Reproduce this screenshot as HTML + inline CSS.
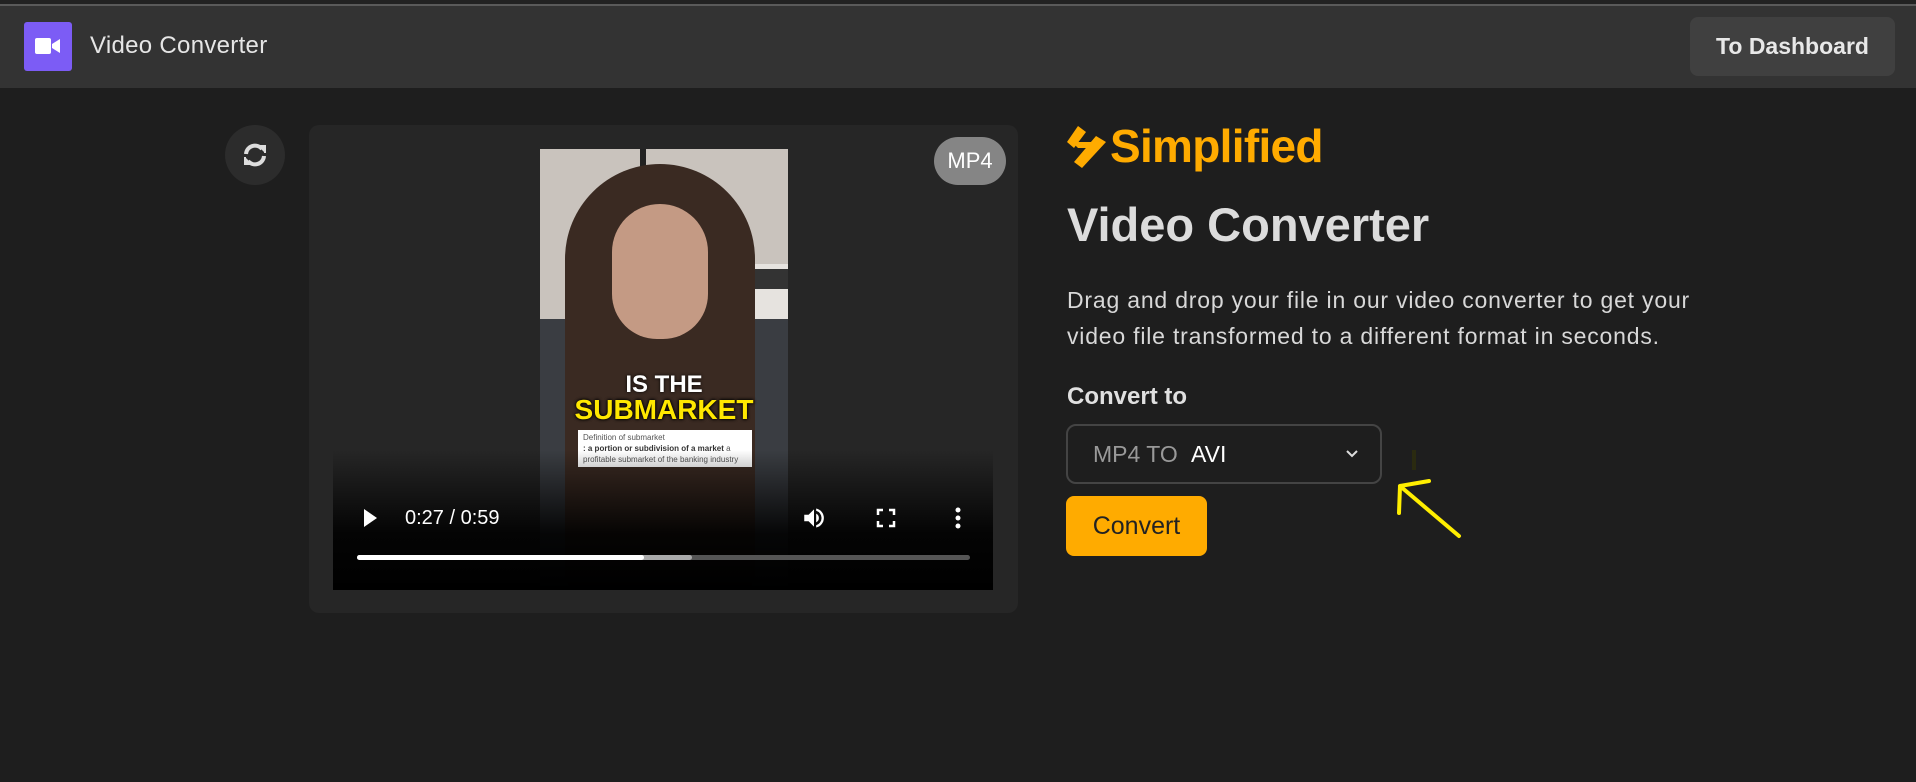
<!DOCTYPE html>
<html><head><meta charset="utf-8"><style>
*{margin:0;padding:0;box-sizing:border-box}
body{width:1916px;height:782px;background:#1e1e1e;font-family:"Liberation Sans",sans-serif;position:relative;overflow:hidden;color:#ddd}
.abs{position:absolute}
</style></head><body>
<div class="abs" style="left:0;top:0;width:1916px;height:4px;background:#222"></div>
<div class="abs" style="left:0;top:4px;width:1916px;height:2px;background:#5a5a5a"></div>
<div class="abs" style="left:0;top:6px;width:1916px;height:82px;background:#333"></div>
<div class="abs" style="left:24px;top:22px;width:48px;height:49px;background:#7c5cf5;border-radius:3px"></div>
<svg class="abs" style="left:34px;top:36px" width="28" height="20" viewBox="0 0 28 20"><rect x="1" y="2" width="16" height="16" rx="2" fill="#fff"/><path d="M18 8 L26 3 V17 L18 12Z" fill="#fff"/></svg>
<div class="abs" style="left:90px;top:32px;font-size:24px;letter-spacing:0.3px;color:#e6e6e6">Video Converter</div>
<div class="abs" style="left:1690px;top:17px;width:205px;height:59px;background:#404040;border-radius:8px;font-size:23px;font-weight:bold;color:#e8e8e8;text-align:center;line-height:59px">To Dashboard</div>

<div class="abs" style="left:225px;top:125px;width:60px;height:60px;border-radius:50%;background:#2c2c2c"></div>
<svg class="abs" style="left:241px;top:141px" width="28" height="28" viewBox="0 0 28 28" fill="none" stroke="#ddd" stroke-width="4"><path d="M5 13 A9 9 0 0 1 21 8"/><path d="M23 15 A9 9 0 0 1 7 20"/><path d="M17 5 L24 5 L24 12" fill="#ddd" stroke-width="2"/><path d="M11 23 L4 23 L4 16" fill="#ddd" stroke-width="2"/></svg>

<div class="abs" style="left:309px;top:125px;width:709px;height:488px;background:#262626;border-radius:10px"></div>
<div class="abs" style="left:333px;top:149px;width:660px;height:441px;background:#262626"></div>
<div class="abs" style="left:540px;top:149px;width:248px;height:441px;overflow:hidden;background:#c9c3bd">
 <div class="abs" style="left:100px;top:0;width:6px;height:60px;background:#222"></div>
 <div class="abs" style="left:190px;top:115px;width:60px;height:80px;background:#e6e3df"></div>
 <div class="abs" style="left:205px;top:120px;width:45px;height:20px;background:#333"></div>
 <div class="abs" style="left:0;top:170px;width:248px;height:271px;background:#3a3d42"></div>
 <div class="abs" style="left:25px;top:15px;width:190px;height:430px;border-radius:95px 95px 20px 20px;background:#3a2a22"></div>
 <div class="abs" style="left:72px;top:55px;width:96px;height:135px;border-radius:48px 48px 45px 45px;background:#c49a84"></div>
 <div class="abs" style="left:0;top:222px;width:248px;text-align:center;font-weight:900;font-size:24px;color:#fff;text-shadow:0 0 3px #000">IS THE</div>
 <div class="abs" style="left:0;top:245px;width:248px;text-align:center;font-weight:900;font-size:28px;color:#ffe800;text-shadow:0 0 3px #000,0 0 3px #000">SUBMARKET</div>
 <div class="abs" style="left:38px;top:281px;width:174px;height:37px;background:#fff;font-size:8px;color:#555;padding:2px 5px;line-height:11px">Definition of submarket<br><b style="color:#333">: a portion or subdivision of a market</b> a<br>profitable submarket of the banking industry</div>
</div>
<div class="abs" style="left:333px;top:450px;width:660px;height:140px;background:linear-gradient(rgba(0,0,0,0),rgba(0,0,0,.9) 60%,#000)"></div>
<svg class="abs" style="left:362px;top:508px" width="16" height="20"><path d="M2 1 L15 10 L2 19Z" fill="#fff"/></svg>
<div class="abs" style="left:405px;top:507px;font-size:20px;color:#fff">0:27 / 0:59</div>
<svg class="abs" style="left:801px;top:505px" width="26" height="26" viewBox="0 0 24 24" fill="#fff"><path d="M3 9v6h4l5 5V4L7 9H3zm13.5 3A4.5 4.5 0 0 0 14 8v8a4.5 4.5 0 0 0 2.5-4zM14 3.2v2.1a7 7 0 0 1 0 13.4v2.1a9 9 0 0 0 0-17.6z"/></svg>
<svg class="abs" style="left:876px;top:508px" width="20" height="20" fill="none" stroke="#fff" stroke-width="2.5"><path d="M2 7V2h5M13 2h5v5M18 13v5h-5M7 18H2v-5"/></svg>
<svg class="abs" style="left:954px;top:506px" width="8" height="24" fill="#fff"><circle cx="4" cy="4" r="2.5"/><circle cx="4" cy="12" r="2.5"/><circle cx="4" cy="20" r="2.5"/></svg>
<div class="abs" style="left:357px;top:555px;width:613px;height:5px;background:#555;border-radius:3px"></div>
<div class="abs" style="left:357px;top:555px;width:335px;height:5px;background:#aaa;border-radius:3px"></div>
<div class="abs" style="left:357px;top:555px;width:287px;height:5px;background:#fff;border-radius:3px"></div>
<div class="abs" style="left:934px;top:137px;width:72px;height:48px;border-radius:24px;background:#858585;color:#fff;font-size:22px;text-align:center;line-height:48px">MP4</div>

<svg class="abs" style="left:1066px;top:124px" width="42" height="46" viewBox="0 0 42 46"><path d="M12 2 L20 8 L8 24 L1 18Z" fill="#ffab00"/><path d="M30 12 L40 18 L16 44 L8 38Z" fill="#ffab00"/><path d="M6 18 L28 18 L34 24 L12 24Z" fill="#ffab00"/></svg>
<div class="abs" style="left:1110px;top:119px;font-size:46px;font-weight:bold;color:#ffab00;letter-spacing:-0.7px">Simplified</div>
<div class="abs" style="left:1067px;top:197px;font-size:47px;font-weight:bold;color:#dcdcdc">Video Converter</div>
<div class="abs" style="left:1067px;top:282px;font-size:23px;letter-spacing:0.8px;line-height:36px;color:#d8d8d8;width:760px">Drag and drop your file in our video converter to get your<br>video file transformed to a different format in seconds.</div>
<div class="abs" style="left:1067px;top:383px;font-size:24px;font-weight:bold;color:#e0e0e0">Convert to</div>
<div class="abs" style="left:1066px;top:424px;width:316px;height:60px;border:2px solid #444;border-radius:10px;background:#1e1e1e"></div>
<div class="abs" style="left:1093px;top:441px;font-size:23px;color:#999">MP4 TO</div>
<div class="abs" style="left:1191px;top:441px;font-size:23px;color:#fff">AVI</div>
<svg class="abs" style="left:1345px;top:449px" width="14" height="10" fill="none" stroke="#ddd" stroke-width="2"><path d="M2 2 L7 7 L12 2"/></svg>
<div class="abs" style="left:1066px;top:496px;width:141px;height:60px;background:#ffab00;border-radius:8px;font-size:25px;color:#222;text-align:center;line-height:60px">Convert</div>
<div class="abs" style="left:1412px;top:450px;width:4px;height:20px;background:#2a2a10"></div>
<svg class="abs" style="left:1390px;top:478px" width="80" height="66" fill="none" stroke="#ffee00" stroke-width="4" stroke-linecap="round"><path d="M69 58 L10 8 M10 8 L9 35 M10 8 L39 3"/></svg>
</body></html>
